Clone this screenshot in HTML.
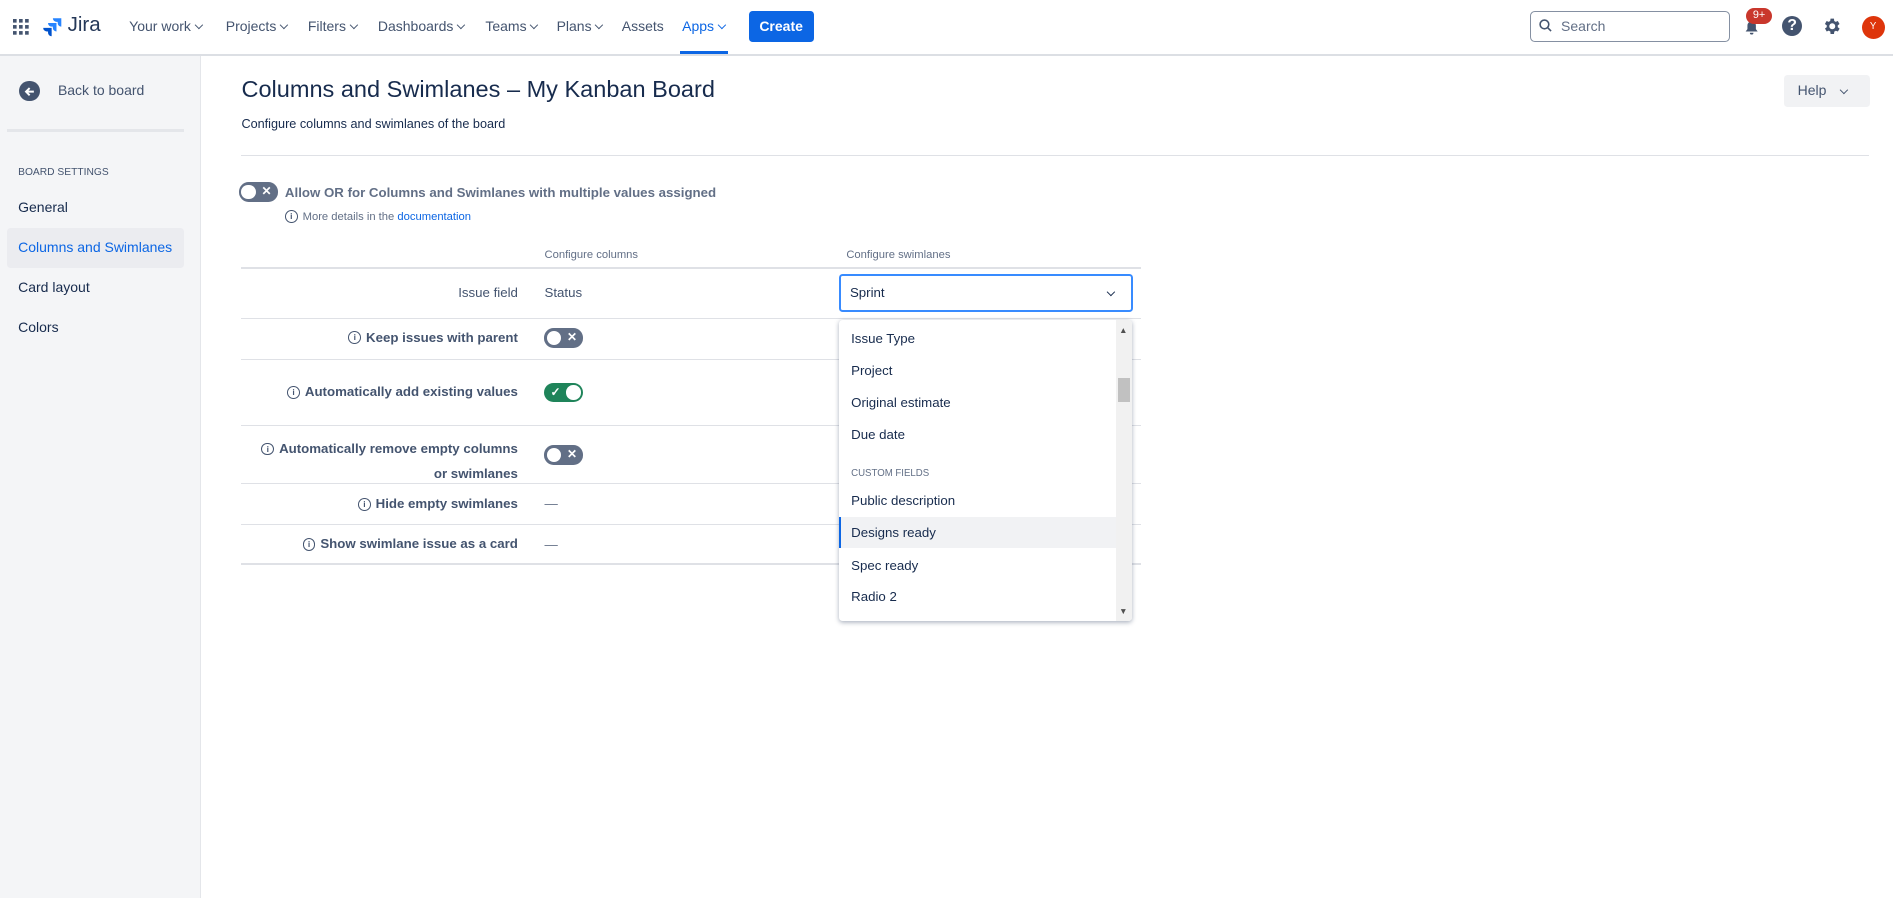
<!DOCTYPE html>
<html><head><meta charset="utf-8"><style>
html,body{margin:0;padding:0;width:1893px;height:898px;overflow:hidden;background:#fff;font-family:"Liberation Sans",Arial,sans-serif;}
#w{zoom:1.2073;width:1568px;height:744px;position:relative;color:#172b4d;}
.a{position:absolute;white-space:nowrap}
.nav{font-size:11.6px;color:#44546f;top:15px}
.chev{display:inline-block;width:4px;height:4px;border-right:1.5px solid currentColor;border-bottom:1.5px solid currentColor;transform:rotate(45deg);margin-left:4px;position:relative;top:-3px}
.a.chev{position:absolute;margin:0}
.side{font-size:11.6px;color:#172b4d}
.lbl{font-size:11px;color:#44546f;text-align:right;right:1139px;font-weight:bold}
.hr{position:absolute;height:1px;background:#dfe1e6}
.tg{position:absolute;width:32px;height:16px;border-radius:8px;background:#626f86}
.tg::before{content:"";position:absolute;left:2px;top:2px;width:12px;height:12px;border-radius:50%;background:#fff}
.tg span{position:absolute;right:5px;top:0;color:#fff;font-size:10px;line-height:16px;font-weight:bold}
.tg.on{background:#1f845a}
.tg.on::before{left:18px}
.tg.on span{left:5px;right:auto}
.info{display:inline-block;width:9px;height:9px;border:1.2px solid #44546f;border-radius:50%;font-size:7px;line-height:9px;text-align:center;color:#44546f;margin-right:4px;vertical-align:1px;font-weight:bold}
.it{position:absolute;left:10px;font-size:11px;color:#172b4d}
</style></head><body><div id="w">
<!-- header -->
<div class="hr" style="left:0;top:45px;width:1568px;background:#dcdfe4"></div>
<svg class="a" style="left:11px;top:16px" width="13" height="13"><g fill="#44546f"><rect x="0" y="0" width="3" height="3"/><rect x="5" y="0" width="3" height="3"/><rect x="10" y="0" width="3" height="3"/><rect x="0" y="5" width="3" height="3"/><rect x="5" y="5" width="3" height="3"/><rect x="10" y="5" width="3" height="3"/><rect x="0" y="10" width="3" height="3"/><rect x="5" y="10" width="3" height="3"/><rect x="10" y="10" width="3" height="3"/></g></svg>
<svg class="a" style="left:35px;top:14px" width="17" height="17" viewBox="0 0 17 17"><g fill="#2684ff"><path d="M16 1H9a3 3 0 0 0 3 3h1v1a3 3 0 0 0 3 3z"/><path d="M12 5H5a3 3 0 0 0 3 3h1v1a3 3 0 0 0 3 3z"/><path d="M8 9H1a3 3 0 0 0 3 3h1v1a3 3 0 0 0 3 3z" fill="#0052cc"/></g></svg>
<div class="a" style="left:56px;top:11px;font-size:17px;color:#253858">Jira</div>
<div class="a nav" style="left:107px">Your work<span class="chev"></span></div>
<div class="a nav" style="left:187px">Projects<span class="chev"></span></div>
<div class="a nav" style="left:255px">Filters<span class="chev"></span></div>
<div class="a nav" style="left:313px">Dashboards<span class="chev"></span></div>
<div class="a nav" style="left:402px">Teams<span class="chev"></span></div>
<div class="a nav" style="left:461px">Plans<span class="chev"></span></div>
<div class="a nav" style="left:515px">Assets</div>
<div class="a nav" style="left:565px;color:#0c66e4">Apps<span class="chev"></span></div>
<div class="a" style="left:563px;top:42px;width:40px;height:3px;background:#0c66e4"></div>
<div class="a" style="left:620px;top:9px;width:54px;height:26px;background:#0c66e4;border-radius:3px;color:#fff;font-size:11.6px;font-weight:bold;text-align:center;line-height:26px">Create</div>
<div class="a" style="left:1267px;top:9px;width:164px;height:24px;border:1px solid #8590a2;border-radius:4px"></div>
<svg class="a" style="left:1275px;top:16px" width="11" height="11"><circle cx="4.5" cy="4.5" r="3.6" fill="none" stroke="#44546f" stroke-width="1.3"/><path d="M7 7l3 3" stroke="#44546f" stroke-width="1.3"/></svg>
<div class="a" style="left:1293px;top:15px;font-size:11.6px;color:#626f86">Search</div>
<svg class="a" style="left:1443px;top:14px" width="16" height="16"><path d="M3 12h10l-1.5-2V7a3.5 3.5 0 0 0-7 0v3z M6.5 13a1.5 1.5 0 0 0 3 0z" fill="#44546f"/></svg>
<div class="a" style="left:1446px;top:7px;width:22px;height:13px;border-radius:7px;background:#c9372c;color:#fff;font-size:9px;text-align:center;line-height:13px">9+</div>
<div class="a" style="left:1476px;top:13px;width:17px;height:17px;border-radius:50%;background:#44546f;color:#fff;font-size:13px;font-weight:bold;text-align:center;line-height:17px">?</div>
<svg class="a" style="left:1509px;top:13px" width="17" height="17" viewBox="0 0 24 24"><path fill="#44546f" d="M19.4 13a7.5 7.5 0 0 0 0-2l2.1-1.6-2-3.5-2.5 1a7.5 7.5 0 0 0-1.700-1L15 3h-4l-.4 2.8a7.5 7.5 0 0 0-1.7 1l-2.5-1-2 3.5L6.6 11a7.5 7.5 0 0 0 0 2l-2.1 1.6 2 3.5 2.5-1a7.5 7.5 0 0 0 1.7 1L11 21h4l.4-2.8a7.5 7.5 0 0 0 1.7-1l2.5 1 2-3.5zM13 15.5a3.5 3.5 0 1 1 0-7 3.5 3.5 0 0 1 0 7z" transform="translate(-1 0)"/></svg>
<div class="a" style="left:1542px;top:13px;width:19px;height:19px;border-radius:50%;background:#de350b;color:#fff;font-size:8px;text-align:center;line-height:19px">Y</div>
<!-- sidebar -->
<div class="a" style="left:0;top:46px;width:166px;height:698px;background:#f4f5f7;border-right:1px solid #e4e6ea"></div>
<div class="a" style="left:16px;top:67px;width:17px;height:17px;border-radius:50%;background:#44546f"></div>
<svg class="a" style="left:19px;top:70px" width="11" height="11"><path d="M9 5.5H2.5M5.5 2.5l-3 3 3 3" stroke="#fff" stroke-width="1.6" fill="none"/></svg>
<div class="a side" style="left:48px;top:68px;color:#44546f">Back to board</div>
<div class="a" style="left:6px;top:107px;width:146px;height:2px;background:#e4e6ea"></div>
<div class="a" style="left:15px;top:138px;font-size:8.5px;color:#44546f">BOARD SETTINGS</div>
<div class="a side" style="left:15px;top:165px">General</div>
<div class="a" style="left:6px;top:189px;width:146px;height:33px;background:#ebecf0;border-radius:3px"></div>
<div class="a side" style="left:15px;top:198px;color:#0c66e4">Columns and Swimlanes</div>
<div class="a side" style="left:15px;top:231px">Card layout</div>
<div class="a side" style="left:15px;top:264px">Colors</div>
<!-- main -->
<div class="a" style="left:200px;top:63px;font-size:19.5px;font-weight:500;color:#172b4d">Columns and Swimlanes – My Kanban Board</div>
<div class="a" style="left:200px;top:97px;font-size:10.5px">Configure columns and swimlanes of the board</div>
<div class="hr" style="left:200px;top:128px;width:1348px"></div>
<div class="a" style="left:1478px;top:62px;width:71px;height:27px;background:#f1f2f4;border-radius:3px"></div>
<div class="a" style="left:1489px;top:68px;font-size:11.6px;color:#44546f">Help</div>
<span class="a chev" style="left:1525px;top:72px;color:#44546f"></span>
<div class="tg" style="left:198px;top:151px"><span>✕</span></div>
<div class="a" style="left:236px;top:153px;font-size:11px;font-weight:bold;color:#626f86">Allow OR for Columns and Swimlanes with multiple values assigned</div>
<div class="a" style="left:236px;top:174px;font-size:9.3px;color:#626f86"><span class="info">i</span>More details in the <span style="color:#0c66e4">documentation</span></div>
<!-- table -->
<div class="a" style="left:451px;top:206px;font-size:9.3px;color:#626f86">Configure columns</div>
<div class="a" style="left:701px;top:206px;font-size:9.3px;color:#626f86">Configure swimlanes</div>
<div class="hr" style="left:200px;top:221px;width:745px;height:2px"></div>
<div class="hr" style="left:200px;top:263px;width:745px"></div>
<div class="hr" style="left:200px;top:297px;width:745px"></div>
<div class="hr" style="left:200px;top:352px;width:745px"></div>
<div class="hr" style="left:200px;top:400px;width:745px"></div>
<div class="hr" style="left:200px;top:434px;width:745px"></div>
<div class="hr" style="left:200px;top:466px;width:745px;height:2px"></div>
<div class="a lbl" style="top:236px;font-weight:normal">Issue field</div>
<div class="a" style="left:451px;top:236px;font-size:11px;color:#44546f">Status</div>
<div class="a lbl" style="top:273px"><span class="info">i</span>Keep issues with parent</div>
<div class="tg" style="left:451px;top:272px"><span>✕</span></div>
<div class="a lbl" style="top:318px"><span class="info">i</span>Automatically add existing values</div>
<div class="tg on" style="left:451px;top:317px"><span>✓</span></div>
<div class="a lbl" style="top:361px;line-height:21px"><span class="info">i</span>Automatically remove empty columns<br>or swimlanes</div>
<div class="tg" style="left:451px;top:369px"><span>✕</span></div>
<div class="a lbl" style="top:411px"><span class="info">i</span>Hide empty swimlanes</div>
<div class="a" style="left:451px;top:411px;font-size:11px;color:#626f86">—</div>
<div class="a lbl" style="top:444px"><span class="info">i</span>Show swimlane issue as a card</div>
<div class="a" style="left:451px;top:445px;font-size:11px;color:#626f86">—</div>
<!-- select -->
<div class="a" style="left:695px;top:227px;width:240px;height:28px;border:2px solid #388bff;border-radius:3px"></div>
<div class="a" style="left:704px;top:236px;font-size:11px">Sprint</div>
<span class="a chev" style="left:918px;top:239px;color:#172b4d"></span>
<!-- dropdown -->
<div class="a" style="left:695px;top:265px;width:243px;height:249px;background:#fff;border-radius:3px;box-shadow:0 1px 4px rgba(9,30,66,.35);overflow:hidden">
 <div class="a" style="left:229px;top:0;width:14px;height:249px;background:#f1f1f1"></div>
 <div class="a" style="left:231px;top:48px;width:10px;height:20px;background:#c1c1c1"></div>
 <div class="a" style="left:232px;top:4px;font-size:7px;color:#505050">▲</div>
 <div class="a" style="left:232px;top:237px;font-size:7px;color:#505050">▼</div>
 <div class="it" style="top:9px">Issue Type</div>
 <div class="it" style="top:36px">Project</div>
 <div class="it" style="top:62px">Original estimate</div>
 <div class="it" style="top:89px">Due date</div>
 <div class="it" style="top:123px;font-size:8px;color:#626f86">CUSTOM FIELDS</div>
 <div class="it" style="top:143px">Public description</div>
 <div class="a" style="left:0;top:163px;width:229px;height:26px;background:#f1f2f4;border-left:2px solid #0c66e4;box-sizing:border-box"></div>
 <div class="it" style="top:170px">Designs ready</div>
 <div class="it" style="top:197px">Spec ready</div>
 <div class="it" style="top:223px">Radio 2</div>
</div>
</div></body></html>
